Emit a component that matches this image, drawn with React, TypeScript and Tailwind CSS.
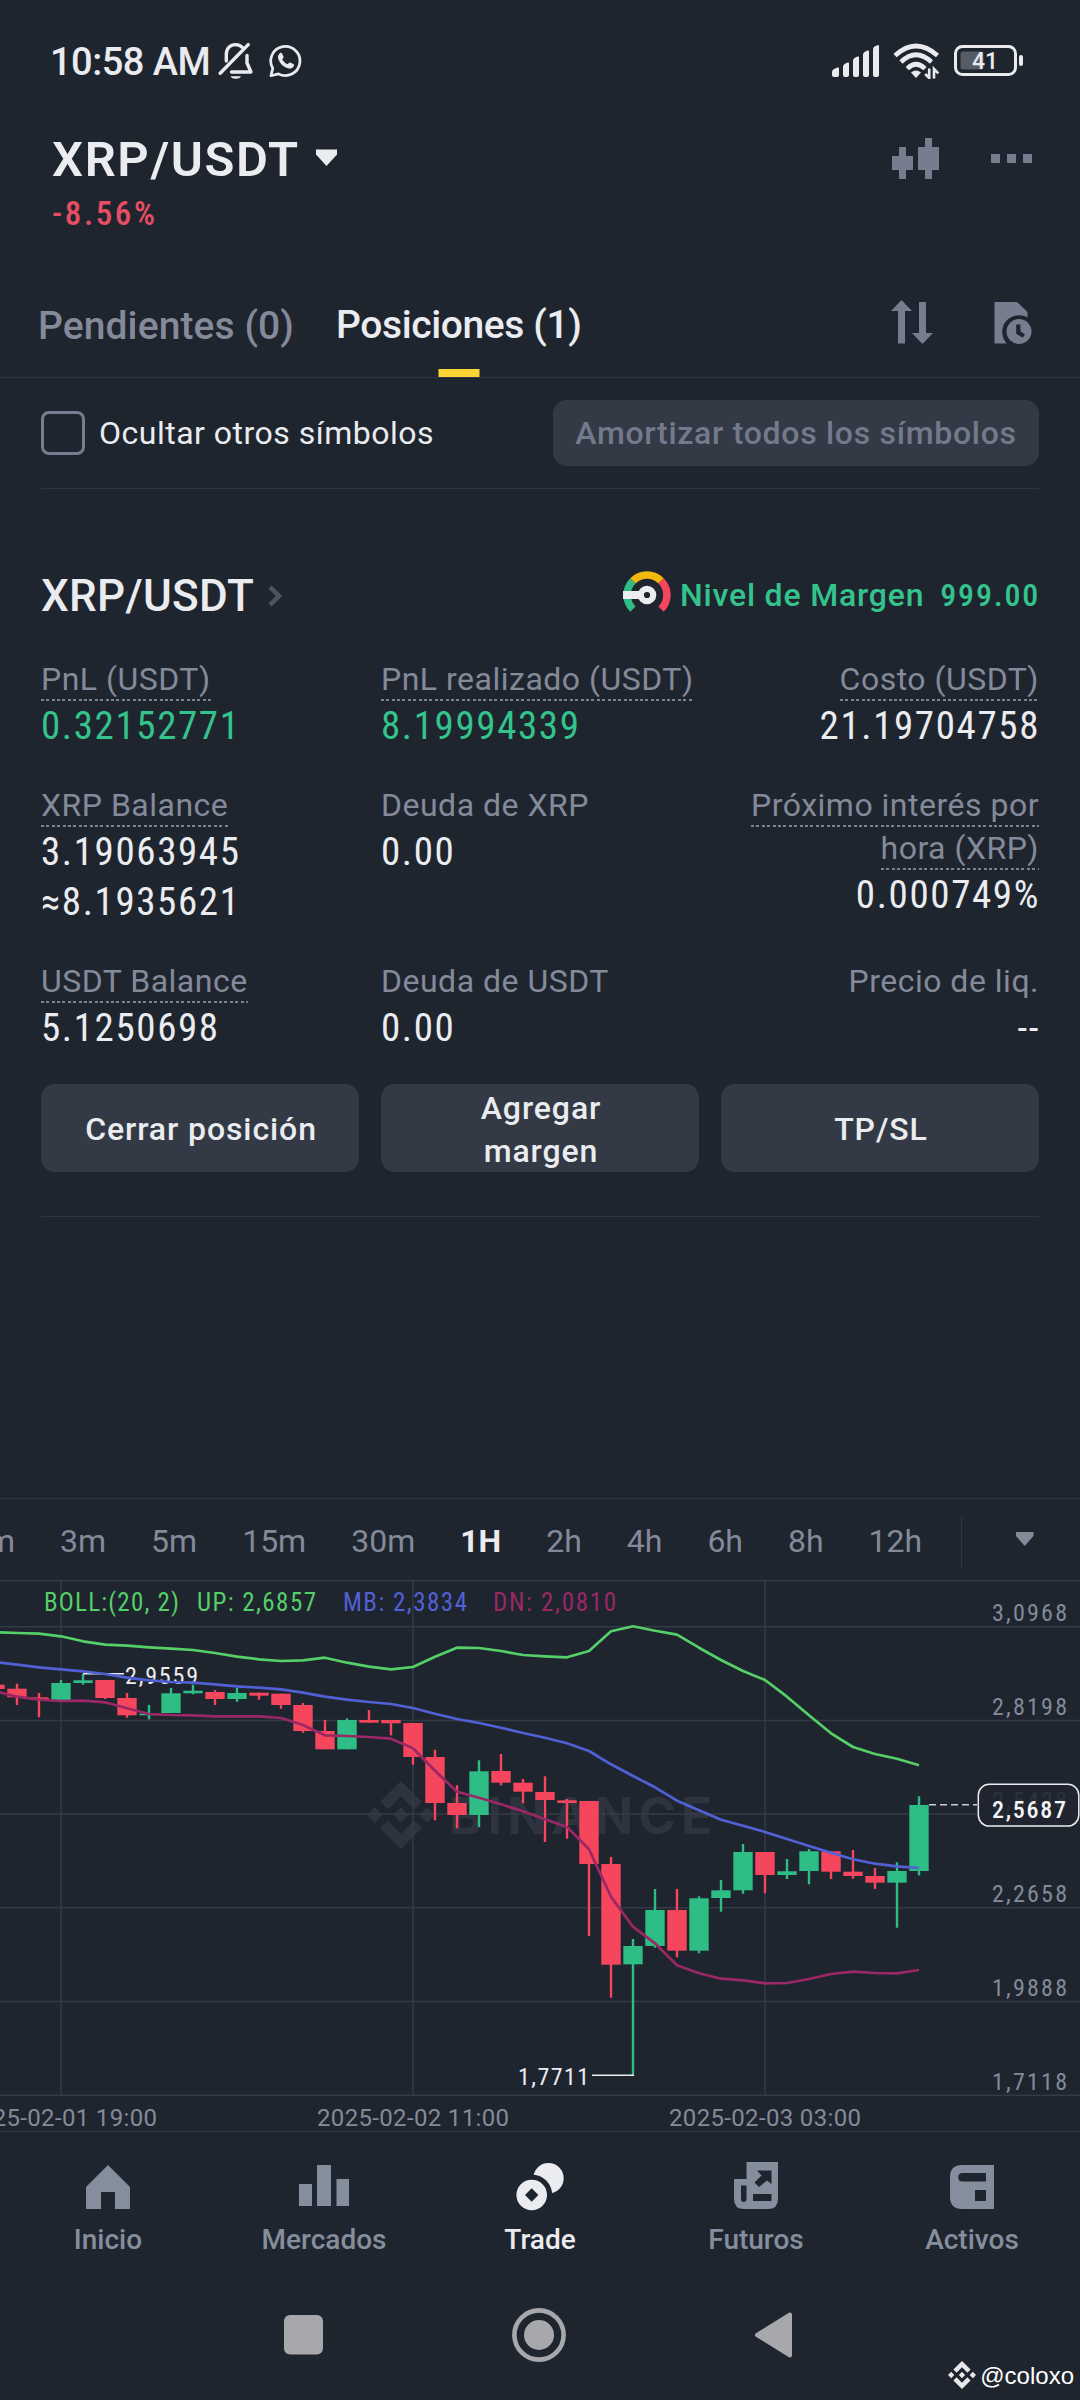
import type { ReactNode } from "react"
import { SiBinance } from "react-icons/si"
import { clsx } from "clsx"

const BG = "#1f252f"
const GRID = "#343b46"
const UP = "#2ebd85"
const DOWN = "#f6465d"

type Stat = {
  labels: string[]
  values: string[]
  hint?: boolean
  positive?: boolean
}

const stats: Stat[] = [
  { labels: ["PnL (USDT)"], values: ["0.32152771"], hint: true, positive: true },
  { labels: ["PnL realizado (USDT)"], values: ["8.19994339"], hint: true, positive: true },
  { labels: ["Costo (USDT)"], values: ["21.19704758"], hint: true },
  { labels: ["XRP Balance"], values: ["3.19063945", "≈8.1935621"], hint: true },
  { labels: ["Deuda de XRP"], values: ["0.00"] },
  { labels: ["Próximo interés por", "hora (XRP)"], values: ["0.000749%"], hint: true },
  { labels: ["USDT Balance"], values: ["5.1250698"], hint: true },
  { labels: ["Deuda de USDT"], values: ["0.00"] },
  { labels: ["Precio de liq."], values: ["--"] },
]

const periods = ["1m", "3m", "5m", "15m", "30m", "1H", "2h", "4h", "6h", "8h", "12h"]

// [direction, body top, body bottom, high, low], one candle per hour
const candles: [1 | -1, number, number, number, number][] = [
  [-1, 104.7, 109, 104.7, 109],
  [-1, 108.7, 117.3, 103.7, 125],
  [-1, 117.3, 120, 113, 137.3],
  [1, 103, 120, 100, 120],
  [1, 100.3, 103, 94, 104.7],
  [-1, 100, 118, 100, 119],
  [-1, 118, 135.3, 113, 137.7],
  [1, 133.7, 135.3, 125, 139.3],
  [1, 113.3, 133, 108, 133],
  [1, 110.7, 113.3, 104.7, 114.3],
  [-1, 112, 119, 110, 125],
  [1, 113, 119, 108, 121.7],
  [-1, 112.7, 115.7, 112.7, 119.7],
  [-1, 113.7, 125, 113.7, 128.7],
  [-1, 125, 151, 123, 152.7],
  [-1, 151, 169.3, 140, 169.3],
  [1, 140, 169.3, 138.3, 169.3],
  [-1, 140, 142.7, 130, 142.7],
  [-1, 140, 143.3, 140, 155.3],
  [-1, 143, 177, 143, 184.7],
  [-1, 177, 223, 169.7, 240.3],
  [-1, 223, 235, 205.3, 248.3],
  [1, 191.3, 235, 180.3, 247],
  [-1, 191, 202.7, 174, 205.3],
  [-1, 202.7, 211.7, 199, 223.3],
  [-1, 212, 220, 196.3, 262],
  [-1, 220.3, 223, 219, 258.7],
  [-1, 221, 284, 221, 356],
  [-1, 284, 384.7, 277, 417.7],
  [1, 366, 384.3, 359, 495.3],
  [1, 330, 366, 309, 367.7],
  [-1, 330, 370.7, 309, 377.3],
  [1, 318.3, 370.7, 316.3, 373.3],
  [1, 310.3, 318, 300, 331.7],
  [1, 272, 310.3, 264, 313.7],
  [-1, 272, 295, 272, 313.3],
  [1, 291.3, 295, 279, 299],
  [1, 271.3, 291, 269, 304.3],
  [-1, 271.3, 291.7, 271.3, 299],
  [-1, 291.7, 296, 270, 298.7],
  [-1, 296, 302.7, 288, 309],
  [1, 291, 302.7, 282.3, 347.7],
  [1, 225, 291, 216.3, 295.3],
]

const bands = [
  {
    color: "#9b2766",
    points: [
      111, 116.7, 119.7, 121, 120.7, 122.3, 128.3, 134, 135, 135.3, 136.3, 136.3, 136.3, 138, 145, 155.3, 156, 157,
      158.7, 168.3, 190.7, 211.7, 217.7, 224.3, 231.3, 239.3, 247, 269.3, 316.7, 346.7, 363.3, 385.3, 393.3, 398.7,
      400.3, 403.3, 403, 399, 394, 391.7, 393, 393.3, 390,
    ],
  },
  {
    color: "#5260d6",
    points: [
      82, 84.7, 87.3, 89.3, 91.3, 94, 97.7, 100.3, 102, 102.7, 104.3, 106.3, 107.7, 109.3, 112.7, 116.7, 119.7, 122,
      124, 128, 133.7, 139, 143, 147.7, 153, 157.7, 163.3, 171, 184.3, 196, 207.3, 220.7, 230.3, 239.7, 245.7, 252,
      259, 266, 272.7, 279.3, 283.7, 286.3, 288,
    ],
  },
  {
    color: "#55d069",
    points: [
      52.3, 53, 53.7, 56.3, 61.3, 64.7, 65.7, 67.3, 68.7, 70, 73, 76.7, 79.3, 81, 80.3, 77.7, 82.7, 86.7, 89.3, 87,
      76.7, 67.7, 68, 71, 75, 76.3, 77.3, 71, 51.3, 46.3, 50.7, 54.7, 67.7, 80, 91, 100, 116.7, 135.3, 153.3, 167,
      174, 178.7, 185.3,
    ],
  },
]

const priceAxis = ["3,0968", "2,8198", "2,5428", "2,2658", "1,9888", "1,7118"]

const timeAxis = [
  { x: 61, label: "2025-02-01 19:00" },
  { x: 413, label: "2025-02-02 11:00" },
  { x: 765, label: "2025-02-03 03:00" },
]

const candleX = (i: number) => -5 + i * 22

function StatusBar() {
  return (
    <div className="flex h-[122px] items-center pl-[50px] pr-[56px] text-[#e9ebef]">
      <span className="w-[168px] whitespace-nowrap pt-px text-[38px] font-medium leading-[46px] tracking-[-0.5px]">10:58 AM</span>
      <svg width="36" height="38" viewBox="0 0 36 38" fill="none" stroke="currentColor" strokeWidth="3.4" strokeLinecap="round" strokeLinejoin="round">
        <path d="M8.3 19V12.5C8.3 6 12.5 2.6 17.5 2.6c3 0 5.6 1.200 7.200 3.200" />
        <path d="M29 13.500v7.500l4 9H13.500" />
        <path d="M2.200 31.200 30.200 2.600" />
        <path d="M12.500 34.200h10.500a5.500 3.600 0 0 1-10.500 0Z" fill="currentColor" stroke="none" />
      </svg>
      <svg className="ml-3.5" width="35" height="36" viewBox="0 0 36 36" fill="none">
        <path d="M3 33.200 4.900 25.600A15 15 0 1 1 10.700 31.200Z" stroke="currentColor" strokeWidth="2.800" strokeLinejoin="round" />
        <path
          d="M12.100 9.900c.8-.7 1.800-.6 2.300.3l1.500 2.900c.3.700.2 1.200-.3 1.800l-1 1.200c1.200 2.400 3 4.100 5.600 5.300l1.400-1.400c.5-.5 1-.6 1.600-.3l2.900 1.500c.8.5.9 1.300.4 2.100-1.400 2.200-3.700 2.900-6.300 2.100-4.800-1.500-8.200-4.900-9.600-9.400-.8-2.500-.2-4.700 1.500-6.100Z"
          fill="currentColor"
        />
      </svg>

      <svg className="ml-auto" width="48" height="32" viewBox="0 0 48 32" fill="currentColor">
        <path d="M0 27q0-2 2-3l3.500-1.500q1.500-.5 1.500 1V30q0 2-2 2H2q-2 0-2-2Z" />
        <path d="M11 22q0-2 1.500-3l3-1.500q1.500-.5 1.500 1V30q0 2-2 2h-2q-2 0-2-2Z" />
        <path d="M21 16q0-2 1.500-3l3-1.500q1.500-.5 1.500 1V30q0 2-2 2h-2q-2 0-2-2Z" />
        <path d="M31 10q0-2 1.500-3l3-1.500q1.500-.5 1.500 1V30q0 2-2 2h-2q-2 0-2-2Z" />
        <path d="M41 4.500q0-2 1.500-3l3-1.300q1.500-.5 1.500 1V30q0 2-2 2h-2q-2 0-2-2Z" />
      </svg>
      <svg className="ml-[13px]" width="47" height="36" viewBox="0 0 47 36" fill="none" stroke="currentColor" strokeWidth="4.600">
        <path d="M2 12.500Q23 -6.500 44.500 12.500" />
        <path d="M8 19Q23 4.500 38.500 19" />
        <path d="M14.300 25.600Q23 17 32 25.600" />
        <path d="M18 29.500q5-4 10 0l-5 5.500Z" fill="currentColor" stroke="none" />
        <g strokeWidth="2.600">
          <path d="M36.200 25.500v9.500l-4-4M41 35.500V26l4.300 4.300" />
        </g>
      </svg>
      <svg className="ml-3.5" width="70" height="32" viewBox="0 0 70 32">
        <rect x="1.500" y="1.500" width="60" height="28" rx="7" fill="none" stroke="currentColor" strokeWidth="3" />
        <rect x="6.500" y="6.500" width="23" height="18" rx="2.500" fill="#565b65" />
        <rect x="65" y="10" width="4" height="11" rx="2" fill="currentColor" />
        <text x="31" y="24" textAnchor="middle" textLength="26" className="font-medium" fontSize="23" fill="currentColor">
          41
        </text>
      </svg>
    </div>
  )
}

function Header() {
  return (
    <header className="px-[52px] pt-2">
      <div className="flex h-[60px] items-center">
        <h1 className="w-[264px] text-[49px] font-semibold leading-[60px] tracking-[1.6px] text-[#eaecef]">XRP/USDT</h1>
        <svg className="-mt-1" width="22" height="18" viewBox="0 0 22 18" fill="#eaecef">
          <path d="M0 0.500h21v5L10.500 17 0 5.500Z" />
        </svg>
        <svg className="-mt-0.5 ml-auto" width="47" height="42" viewBox="0 0 47 42" fill="#757d8f">
          <path d="M7 9h7v9h7v14h-7v9H7v-9H0V18h7Z" />
          <path d="M33 0h7v9h7v23h-7v9h-7v-9h-7V9h7Z" />
        </svg>
        <svg className="-mt-1 -mr-1 ml-[52px]" width="41" height="9" viewBox="0 0 41 9" fill="#757d8f">
          <path d="M0 0h9v9H0ZM16 0h9v9h-9ZM32 0h9v9h-9Z" />
        </svg>
      </div>
      <p className="mt-1 text-[33px] font-medium leading-10 tracking-[2.6px] text-[#e84d63] font-stretch-semi-condensed">-8.56%</p>
    </header>
  )
}

function OrderTabs() {
  return (
    <div className="mt-10 flex h-[104px] items-center border-b border-[#2f3642] pl-[38px] pr-[48px] text-[39px] font-medium">
      <span className="leading-[48px] tracking-[0.1px] text-[#848a99]">Pendientes (0)</span>
      <span className="relative ml-[42px] flex h-full items-center tracking-[-0.4px] text-[#eaecef]">
        Posiciones (1)
        <span className="absolute bottom-0 left-1/2 h-2 w-[41px] -translate-x-1/2 bg-[#fcd535]" />
      </span>
      <svg className="-mt-2 ml-auto" width="43" height="44" viewBox="0 0 43 44" fill="#757d8f">
        <path d="M10.500 0 21 11h-7v32.500H7V11H0Z" />
        <path d="M31.500 44 42 33h-7V2h-7v31h-7Z" />
      </svg>
      <svg className="-mt-2 ml-[60px]" width="38" height="44" viewBox="0 0 38 44">
        <path d="M0.500 2h22.500L33.500 12V43.500H0.500Z" fill="#757d8f" />
        <circle cx="25" cy="32" r="16.800" fill={BG} />
        <circle cx="25" cy="31.500" r="12.500" fill="#757d8f" />
        <path d="M24.300 24.500v8l5.500 3.500" fill="none" stroke={BG} strokeWidth="4.200" />
      </svg>
    </div>
  )
}

function FilterRow() {
  return (
    <div className="mx-[41px] flex h-[111px] items-center border-b border-[#2f3642] text-[32px]">
      <span className="h-[44px] w-[44px] rounded-lg border-3 border-[#757d8f]" />
      <span className="ml-[14px] tracking-[0.5px] text-[#eaecef]">Ocultar otros símbolos</span>
      <button className="ml-auto h-[66px] w-[486px] whitespace-nowrap rounded-[14px] bg-[#333a46] font-medium tracking-[0.7px] text-[#727a8c]">
        Amortizar todos los símbolos
      </button>
    </div>
  )
}

function GaugeIcon() {
  return (
    <svg width="48" height="48" viewBox="0 0 48 48" fill="none" strokeWidth="7.500">
      <path d="M9.900 38.100A20 20 0 0 1 9.900 9.900" stroke={UP} />
      <path d="M9.900 9.900A20 20 0 0 1 38.100 9.900" stroke="#f0b90b" />
      <path d="M38.100 9.900A20 20 0 0 1 38.100 38.100" stroke={DOWN} />
      <path d="M0 24h18" stroke="#eaecef" strokeWidth="8" />
      <circle cx="24" cy="24" r="6.200" stroke="#eaecef" strokeWidth="6.200" />
    </svg>
  )
}

function StatCell({ stat, right }: { stat: Stat; right: boolean }) {
  return (
    <div className={clsx("flex flex-col", right ? "items-end" : "items-start")}>
      {stat.labels.map((label) => (
        <span
          key={label}
          className={clsx(
            "h-[43px] whitespace-nowrap text-[32px] leading-[43px] tracking-[0.5px] text-[#848a99]",
            stat.hint &&
              "bg-[repeating-linear-gradient(90deg,#7b8291_0_3px,transparent_3px_5.4px)] bg-[length:100%_2px] bg-bottom bg-no-repeat",
          )}
        >
          {label}
        </span>
      ))}
      {stat.values.map((value) => (
        <span
          key={value}
          className={clsx(
            "h-[50px] text-[39px] leading-[50px] tracking-[1.6px] font-stretch-semi-condensed",
            stat.positive ? "text-[#34c38c]" : "text-[#eaecef]",
            right && "-mr-px",
          )}
        >
          {value}
        </span>
      ))}
    </div>
  )
}

function ActionButton({ children }: { children: ReactNode }) {
  return (
    <button className="flex h-[88px] items-center justify-center rounded-[14px] bg-[#333a46] pl-0.5 pt-[3px] text-center text-[32px] font-medium leading-[43px] tracking-[0.9px] text-[#eaecef]">
      {children}
    </button>
  )
}

function PositionCard() {
  return (
    <section className="mx-[41px] border-b border-[#2f3642] pb-[44px] pt-[77px]">
      <div className="flex h-[60px] items-center">
        <h2 className="text-[44px] font-medium leading-[60px] tracking-[0.3px] text-[#eaecef]">XRP/USDT</h2>
        <svg className="ml-[14px]" width="15" height="22" viewBox="0 0 15 22" fill="none" stroke="#4c5463" strokeWidth="4.500">
          <path d="M2 2.200 11 11 2 19.800" />
        </svg>
        <div className="-mt-0.5 ml-auto flex items-center text-[32px] font-medium text-[#34c38c]">
          <GaugeIcon />
          <span className="ml-[9px] tracking-[0.8px]">Nivel de Margen</span>
          <span className="-mr-px ml-4 tracking-[1.8px] font-stretch-semi-condensed">999.00</span>
        </div>
      </div>
      <div className="mt-8 grid grid-cols-3 gap-x-[22px] gap-y-[33px]">
        {stats.map((stat, i) => (
          <StatCell key={stat.labels[0]} stat={stat} right={i % 3 === 2} />
        ))}
      </div>
      <div className="mt-[31px] grid grid-cols-3 gap-x-[22px]">
        <ActionButton>Cerrar posición</ActionButton>
        <ActionButton>
          Agregar
          <br />
          margen
        </ActionButton>
        <ActionButton>TP/SL</ActionButton>
      </div>
    </section>
  )
}

function PeriodBar() {
  return (
    <div className="flex h-[82px] items-center overflow-hidden border-t border-[#2f3642] pt-[3px]">
      <div className="-ml-[31px] flex w-[992px] gap-[45px] text-[32px]">
        {periods.map((period) => (
          <span key={period} className={period === "1H" ? "font-bold text-[#eaecef]" : "text-[#848a99]"}>
            {period}
          </span>
        ))}
      </div>
      <span className="h-[51px] w-px bg-[#2f3642]" />
      <svg className="-mt-1 ml-[54px]" width="18" height="14" viewBox="0 0 18 14" fill="#848a99">
        <path d="M0 0h17.500v4L8.700 14 0 4Z" />
      </svg>
    </div>
  )
}

function Chart() {
  return (
    <svg className="block" width="1080" height="551" viewBox="0 0 1080 551" fontSize="24">
      <SiBinance x="367" y="201" size={68} color="#2e343f" />
      <text x="449" y="254" textLength="263" fontSize="51" fill="#2e343f" className="font-[Inter] font-bold">
        BINANCE
      </text>

      <g stroke={GRID} strokeWidth="1.500">
        <path d="M0 0.700H1080" />
        {priceAxis.map((price, i) => (
          <path key={price} d={`M0 ${46.700 + i * 93.700}H1080`} />
        ))}
        {timeAxis.map(({ x }) => (
          <path key={x} d={`M${x} 0V515`} />
        ))}
      </g>

      <g fontSize="25" className="font-stretch-semi-condensed">
        <text x="44" y="31" textLength="135" fill="#55d069">BOLL:(20, 2)</text>
        <text x="197" y="31" textLength="119" fill="#55d069">UP: 2,6857</text>
        <text x="343" y="31" textLength="124" fill="#5260d6">MB: 2,3834</text>
        <text x="493" y="31" textLength="123" fill="#9b2766">DN: 2,0810</text>
      </g>

      {candles.map(([dir, top, bottom, high, low], i) => (
        <g key={i} fill={dir === 1 ? UP : DOWN}>
          <rect x={candleX(i) - 1.200} y={high} width="2.400" height={low - high} />
          <rect x={candleX(i) - 9.700} y={top} width="19.400" height={bottom - top} />
        </g>
      ))}

      <path d="M83 93.700h41" stroke="#eaecef" strokeWidth="1.500" />
      <text x="125" y="104" textLength="73" fill="#eaecef" className="font-stretch-semi-condensed">2,9559</text>
      <path d="M592 495.200h42" stroke="#eaecef" strokeWidth="1.500" />
      <text x="518" y="505" textLength="71" fill="#eaecef" className="font-stretch-semi-condensed">1,7711</text>

      {bands.map(({ color, points }) => (
        <polyline
          key={color}
          points={points.map((y, i) => `${candleX(i)},${y}`).join(" ")}
          fill="none"
          stroke={color}
          strokeWidth="2.700"
          strokeLinejoin="round"
        />
      ))}

      <g fill="#848a99">
        {priceAxis.map((price, i) => (
          <text key={price} x="992" y={41.300 + i * 93.700} textLength="75" className="font-stretch-semi-condensed">{price}</text>
        ))}
        {timeAxis.map(({ x, label }) => (
          <text key={label} x={x} y="546" textAnchor="middle" textLength="192">{label}</text>
        ))}
      </g>

      <path d="M929 224.700h48" stroke="#c9ccd2" strokeWidth="1.500" strokeDasharray="7 4" />
      <rect x="978.300" y="204.300" width="100.500" height="41.800" rx="11" fill={BG} fillOpacity="0.870" stroke="#eaecef" strokeWidth="1.500" />
      <text x="992" y="238.300" textLength="74" fill="#f4f5f7" className="font-medium font-stretch-semi-condensed">2,5687</text>
    </svg>
  )
}

// every glyph sits in a 52px box above its label
const navItems = [
  {
    label: "Inicio",
    icon: <path d="M4 27 26 5l22 22v22H33V32H19v17H4Z" />,
  },
  {
    label: "Mercados",
    icon: <path d="M1 24h13v22H1ZM19 5h14v41H19ZM38.500 19H51v27H38.500Z" />,
  },
  {
    label: "Trade",
    active: true,
    icon: (
      <>
        <circle cx="34.500" cy="18.300" r="15.200" />
        <circle cx="17.700" cy="35" r="20.500" fill={BG} />
        <circle cx="17.700" cy="35" r="15.300" />
        <path d="m17.700 28.300 6.700 6.700-6.700 6.700L11 35Z" fill={BG} />
      </>
    ),
  },
  {
    label: "Futuros",
    icon: (
      <>
        <path d="M4 19h12.500V2H48v37q0 10-10 10H14Q4 49 4 39Z" />
        <g fill={BG}>
          <path d="M11 25.500h5.500V39q0 3-2.700 3T11 39Z" />
          <path d="M23 34h18.500v7H23Z" />
          <path d="M27 10.500h14.500V24l-4.500-3.500-8 6.500-4.500-4.500 7-7Z" />
        </g>
      </>
    ),
  },
  {
    label: "Activos",
    icon: (
      <>
        <path d="M16 5h32v44H16Q4 49 4 37V17Q4 5 16 5Z" />
        <path d="M40 13v8.500H16.500q-4.300 0-4.300-4.200T16.500 13ZM29 30h11v11H29Z" fill={BG} />
      </>
    ),
  },
]

function BottomNav() {
  return (
    <nav className="grid grid-cols-5 border-t border-[#343b46] pt-7">
      {navItems.map(({ label, icon, active }) => (
        <div key={label} className={clsx("flex flex-col items-center", active ? "text-[#eaecef]" : "text-[#848e9c]")}>
          <svg width="52" height="52" viewBox="0 0 52 52" fill="currentColor">
            {icon}
          </svg>
          <span className="mt-3 text-[28px] font-medium leading-8">{label}</span>
        </div>
      ))}
    </nav>
  )
}

function SystemBar() {
  return (
    <div className="flex h-[144px] gap-[181px] pl-[277px] pt-[52px] text-[#a7a8ac]">
      <svg width="54" height="54" viewBox="0 0 54 54" fill="currentColor">
        <rect x="7" y="7" width="39" height="39.500" rx="6" />
      </svg>
      <svg width="54" height="54" viewBox="0 0 54 54" fill="currentColor">
        <circle cx="27" cy="27" r="24.600" fill="none" stroke="currentColor" strokeWidth="4.600" />
        <circle cx="27" cy="27" r="15" />
      </svg>
      <svg width="54" height="54" viewBox="0 0 54 54" fill="currentColor" stroke="currentColor" strokeWidth="4" strokeLinejoin="round">
        <path d="M10 27 43 6.500v41Z" />
      </svg>
    </div>
  )
}

export default function App() {
  return (
    <div className="relative flex h-[2400px] w-[1080px] flex-col overflow-hidden bg-[#1f252f] font-[Roboto,sans-serif]">
      <StatusBar />
      <Header />
      <OrderTabs />
      <FilterRow />
      <PositionCard />
      <div className="mt-auto">
        <PeriodBar />
        <Chart />
        <BottomNav />
        <SystemBar />
      </div>
      <div className="absolute bottom-2 right-[6px] flex items-center gap-1 text-[#e8e8e8]">
        <SiBinance size={28} />
        <span className="pt-0.5 font-['Liberation_Sans',sans-serif] text-[24px] leading-8 text-white">@coloxo</span>
      </div>
    </div>
  )
}
